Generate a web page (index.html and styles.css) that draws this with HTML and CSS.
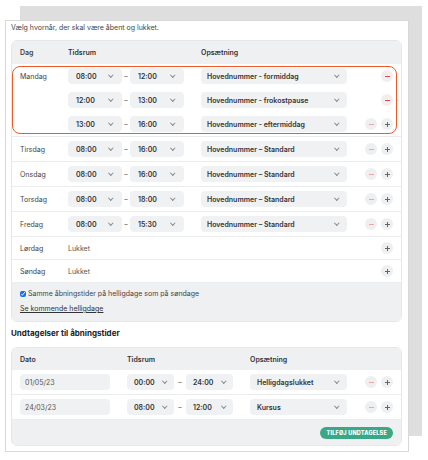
FILE: index.html
```html
<!DOCTYPE html>
<html lang="da">

<head>
    <meta charset="UTF-8">
    <meta name="viewport" content="width=device-width, initial-scale=1.0">
    <title>Åbningstider</title>
    <link rel="stylesheet" href="styles.css">
</head>

<body>
    <div class="card">
        <p class="intro">Vælg hvornår, der skal være åbent og lukket.</p>

        <div class="table">
            <div class="head">
                <span class="day">Dag</span>
                <span class="times">Tidsrum</span>
                <span>Opsætning</span>
            </div>

            <div class="group highlight">
                <div class="row sub">
                    <div class="day">Mandag</div>
                    <div class="times">
                        <div class="sel time"><span>08:00</span><i class="chev"></i></div>
                        <span class="dash">–</span>
                        <div class="sel time"><span>12:00</span><i class="chev"></i></div>
                    </div>
                    <div class="sel setup"><span>Hovednummer - formiddag</span><i class="chev"></i></div>
                    <div class="actions"><span class="btn minus strong"></span></div>
                </div>
                <div class="row sub">
                    <div class="day"></div>
                    <div class="times">
                        <div class="sel time"><span>12:00</span><i class="chev"></i></div>
                        <span class="dash">–</span>
                        <div class="sel time"><span>13:00</span><i class="chev"></i></div>
                    </div>
                    <div class="sel setup"><span>Hovednummer - frokostpause</span><i class="chev"></i></div>
                    <div class="actions"><span class="btn minus strong"></span></div>
                </div>
                <div class="row sub">
                    <div class="day"></div>
                    <div class="times">
                        <div class="sel time"><span>13:00</span><i class="chev"></i></div>
                        <span class="dash">–</span>
                        <div class="sel time"><span>16:00</span><i class="chev"></i></div>
                    </div>
                    <div class="sel setup"><span>Hovednummer - eftermiddag</span><i class="chev"></i></div>
                    <div class="actions"><span class="btn minus"></span><span class="btn plus"></span></div>
                </div>
            </div>

            <div class="row">
                <div class="day">Tirsdag</div>
                <div class="times">
                    <div class="sel time"><span>08:00</span><i class="chev"></i></div>
                    <span class="dash">–</span>
                    <div class="sel time"><span>16:00</span><i class="chev"></i></div>
                </div>
                <div class="sel setup"><span>Hovednummer – Standard</span><i class="chev"></i></div>
                <div class="actions"><span class="btn minus"></span><span class="btn plus"></span></div>
            </div>
            <div class="row">
                <div class="day">Onsdag</div>
                <div class="times">
                    <div class="sel time"><span>08:00</span><i class="chev"></i></div>
                    <span class="dash">–</span>
                    <div class="sel time"><span>16:00</span><i class="chev"></i></div>
                </div>
                <div class="sel setup"><span>Hovednummer – Standard</span><i class="chev"></i></div>
                <div class="actions"><span class="btn minus"></span><span class="btn plus"></span></div>
            </div>
            <div class="row">
                <div class="day">Torsdag</div>
                <div class="times">
                    <div class="sel time"><span>08:00</span><i class="chev"></i></div>
                    <span class="dash">–</span>
                    <div class="sel time"><span>18:00</span><i class="chev"></i></div>
                </div>
                <div class="sel setup"><span>Hovednummer – Standard</span><i class="chev"></i></div>
                <div class="actions"><span class="btn minus"></span><span class="btn plus"></span></div>
            </div>
            <div class="row">
                <div class="day">Fredag</div>
                <div class="times">
                    <div class="sel time"><span>08:00</span><i class="chev"></i></div>
                    <span class="dash">–</span>
                    <div class="sel time"><span>15:30</span><i class="chev"></i></div>
                </div>
                <div class="sel setup"><span>Hovednummer – Standard</span><i class="chev"></i></div>
                <div class="actions"><span class="btn minus"></span><span class="btn plus"></span></div>
            </div>
            <div class="row closed">
                <div class="day">Lørdag</div>
                <div class="times">Lukket</div>
                <div class="actions"><span class="btn plus"></span></div>
            </div>
            <div class="row closed">
                <div class="day">Søndag</div>
                <div class="times">Lukket</div>
                <div class="actions"><span class="btn plus"></span></div>
            </div>

            <div class="foot">
                <label class="check"><input type="checkbox" checked> Samme åbningstider på helligdage som på søndage</label>
                <a class="link" href="#">Se kommende helligdage</a>
            </div>
        </div>

        <h2 class="title">Undtagelser til åbningstider</h2>

        <div class="table">
            <div class="head">
                <span class="date">Dato</span>
                <span class="times2">Tidsrum</span>
                <span>Opsætning</span>
            </div>
            <div class="row">
                <div class="input date">01/05/23</div>
                <div class="times2">
                    <div class="sel time2"><span>00:00</span><i class="chev"></i></div>
                    <span class="dash">–</span>
                    <div class="sel time2"><span>24:00</span><i class="chev"></i></div>
                </div>
                <div class="sel setup2"><span>Helligdagslukket</span><i class="chev"></i></div>
                <div class="actions"><span class="btn minus"></span><span class="btn plus"></span></div>
            </div>
            <div class="row">
                <div class="input date">24/03/23</div>
                <div class="times2">
                    <div class="sel time2"><span>08:00</span><i class="chev"></i></div>
                    <span class="dash">–</span>
                    <div class="sel time2"><span>12:00</span><i class="chev"></i></div>
                </div>
                <div class="sel setup2"><span>Kursus</span><i class="chev"></i></div>
                <div class="actions"><span class="btn minus"></span><span class="btn plus"></span></div>
            </div>
            <div class="foot end">
                <button class="add">Tilføj undtagelse</button>
            </div>
        </div>
    </div>
</body>

</html>
```

FILE: styles.css
```css
body {
    margin: 0;
    background: #fff;
    font-family: Inter, "Noto Sans", sans-serif;
    color: #333;
}

/* white sheet with the grey page peeking out behind it */
.card {
    box-sizing: border-box;
    width: 404px;
    height: 432px;
    margin: 20px 0 0 5px;
    padding: 0 6px 5px 5px;
    background: #fff;
    border: 1px solid #d8d8d8;
    box-shadow: 14px -15px 0 -1px #dedede;
}

.intro {
    margin: 0 0 6px;
    font-size: 7px;
    line-height: 13px;
    color: #444;
}

.table {
    border: 1px solid #e6e7e9;
    border-radius: 6px;
    overflow: hidden;
}

.head {
    display: flex;
    align-items: center;
    height: 23px;
    padding-left: 8px;
    background: #eff0f2;
    font-size: 7px;
    font-weight: 600;
    color: #333;
}

.row {
    display: flex;
    align-items: center;
    height: 24px;
    padding: 0 8px;
    border-bottom: 1px solid #ebecee;
    font-size: 7px;
}

.row.sub {
    border-bottom: none;
}

.row.closed {
    height: 22px;
    color: #555;
}

.group {
    position: relative;
    border-bottom: 1px solid #ebecee;
}

/* orange annotation ring round the Monday rows */
.highlight::after {
    content: "";
    position: absolute;
    top: 2px;
    bottom: 2px;
    left: 0;
    right: 4px;
    border: 1.5px solid #ef5a2b;
    border-radius: 8px;
    pointer-events: none;
}

.day {
    width: 48px;
    flex-shrink: 0;
    color: #444;
}

.times {
    width: 133px;
    flex-shrink: 0;
    display: flex;
    align-items: center;
}

.dash {
    width: 8px;
    text-align: center;
    color: #555;
}

.sel {
    box-sizing: border-box;
    height: 16px;
    display: flex;
    align-items: center;
    justify-content: space-between;
    background: #f0f1f3;
    border-radius: 4px;
    font-weight: 600;
    color: #333;
}

.time {
    width: 54px;
    padding: 0 10px 0 8px;
}

.setup {
    width: 146px;
    padding: 0 9px 0 6px;
}

.chev {
    width: 2.5px;
    height: 2.5px;
    margin-top: -2px;
    border-right: 0.8px solid #888;
    border-bottom: 0.8px solid #888;
    transform: rotate(45deg);
}

.actions {
    margin-left: auto;
    display: flex;
    gap: 4px;
}

.btn {
    position: relative;
    width: 12px;
    height: 12px;
    border-radius: 50%;
    background: #eeeff1;
}

.btn::before,
.plus::after {
    content: "";
    position: absolute;
    left: 3.5px;
    top: 5.5px;
    width: 5px;
    height: 1px;
    background: #666;
}

.plus::after {
    transform: rotate(90deg);
}

.minus::before {
    background: #f4a3a3;
}

.minus.strong {
    background: #f3eded;
}

.minus.strong::before {
    background: #e5484d;
}

.foot {
    padding: 4px 8px 5px;
    background: #eff0f2;
    font-size: 7px;
    color: #444;
}

.check {
    display: flex;
    align-items: center;
    gap: 2px;
    height: 13px;
}

.check input {
    width: 6px;
    height: 6px;
    margin: 0;
    accent-color: #1a6fe0;
}

.link {
    display: block;
    margin-top: 2px;
    line-height: 14px;
    color: #333;
}

.title {
    margin: 3px 0 6px;
    font-size: 8px;
    line-height: 16px;
    font-weight: 700;
    color: #222;
}

.table .head:has(.date) {
    height: 22px;
}

.date {
    width: 107px;
    flex-shrink: 0;
}

.input {
    box-sizing: border-box;
    width: 90px;
    height: 16px;
    margin-right: 17px;
    padding-left: 5px;
    display: flex;
    align-items: center;
    background: #f0f1f3;
    border-radius: 4px;
    color: #555;
}

.times2 {
    width: 123px;
    flex-shrink: 0;
    display: flex;
    align-items: center;
}

.times2 .dash {
    width: 12px;
}

.time2 {
    width: 47px;
    padding: 0 8px 0 7px;
}

.setup2 {
    width: 97px;
    padding: 0 9px 0 7px;
}

.foot.end {
    display: flex;
    justify-content: flex-end;
    align-items: center;
    height: 25px;
    box-sizing: border-box;
    padding: 0 8px;
}

.add {
    height: 12px;
    padding: 0 6px;
    border: none;
    border-radius: 6px;
    background: #3aa886;
    color: #fff;
    font-family: Inter, sans-serif;
    font-size: 5.5px;
    font-weight: 800;
    letter-spacing: 0.2px;
    text-transform: uppercase;
}
```
